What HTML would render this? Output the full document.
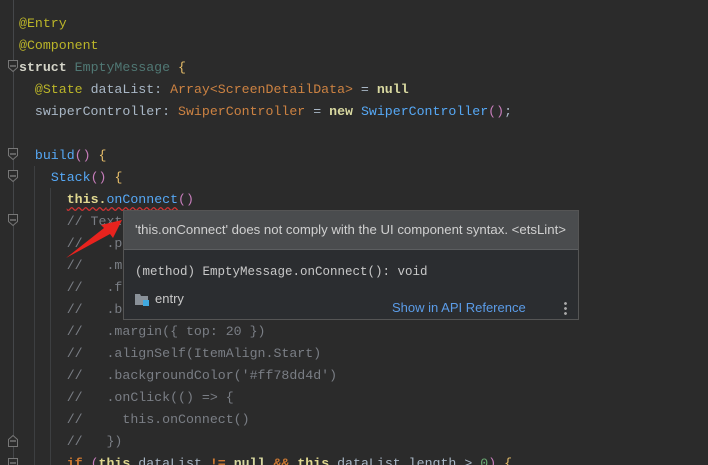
<!DOCTYPE html>
<html style="overflow:hidden;height:465px"><head><meta charset="utf-8"><style>
body{margin:0;width:708px;height:465px;background:#2b2b2b;overflow:hidden;position:relative;font-family:"Liberation Mono",monospace;}
.code{position:absolute;left:19px;top:13px;font-size:13.25px;line-height:22px;color:#a9b7c6;white-space:pre;}
.l{height:22px;}
.an{color:#bbb529}.kw{color:#cc7832;font-weight:bold}.st{color:#d4d4c8;font-weight:bold}
.ty{color:#507874}.br{color:#e8bf6a}.ar{color:#cc8242}.nl{color:#d8d8a0;font-weight:bold}
.fn{color:#56a8f5}.pr{color:#c77dbb}.cm{color:#7a7e85}.th{color:#e0d890;font-weight:bold}.nu{color:#6aab73}
.tip{position:absolute;left:123px;top:210px;width:454px;height:108px;background:#2b2d30;border:1px solid #555;font-family:"Liberation Sans",sans-serif;}
.tip .h{height:38px;background:#4a4c4e;border-bottom:1px solid #5c5e60;color:#d0d0d0;font-size:13.2px;line-height:38px;padding-left:11px;}
</style></head><body>
<div style="position:absolute;left:13px;top:0;width:1px;height:465px;background:#45474a"></div>
<div style="position:absolute;left:34px;top:166px;width:1px;height:299px;background:#3d3f41"></div>
<div style="position:absolute;left:50px;top:188px;width:1px;height:277px;background:#3d3f41"></div>
<svg style="position:absolute;left:6px;top:0" width="16" height="465">
<g fill="#2b2b2b" stroke="#777" stroke-width="1">
<path d="M2.5 60.5h9v7l-4.5 4l-4.5-4z"/><path d="M2.5 148.5h9v7l-4.5 4l-4.5-4z"/><path d="M2.5 170.5h9v7l-4.5 4l-4.5-4z"/><path d="M2.5 214.5h9v7l-4.5 4l-4.5-4z"/><path d="M2.5 446.5h9v-7l-4.5-4l-4.5 4z"/><path d="M2.5 458.5h9v7h-9z"/>
</g><g stroke="#999"><path d="M4 66h6M4 154h6M4 176h6M4 220h6M4 441h6M4 463h6"/></g></svg>
<div class="code"><div class="l an">@Entry</div><div class="l an">@Component</div><div class="l"><span class="st">struct</span> <span class="ty">EmptyMessage</span> <span class="br">{</span></div><div class="l">  <span class="an">@State</span> dataList: <span class="ar">Array&lt;ScreenDetailData&gt;</span> = <span class="nl">null</span></div><div class="l">  swiperController: <span class="ar">SwiperController</span> = <span class="nl">new</span> <span class="fn">SwiperController</span><span class="pr">()</span>;</div><div class="l"></div><div class="l">  <span class="fn">build</span><span class="pr">()</span> <span class="br">{</span></div><div class="l">    <span class="fn">Stack</span><span class="pr">()</span> <span class="br">{</span></div><div class="l">      <span class="th" style="text-decoration:underline wavy #c33;text-underline-offset:3px">this.</span><span class="fn" style="text-decoration:underline wavy #c33;text-underline-offset:3px">onConnect</span><span class="pr">()</span></div><div class="l cm">      // Text</div><div class="l cm">      //   .p</div><div class="l cm">      //   .m</div><div class="l cm">      //   .f</div><div class="l cm">      //   .b</div><div class="l cm">      //   .margin({ top: 20 })</div><div class="l cm">      //   .alignSelf(ItemAlign.Start)</div><div class="l cm">      //   .backgroundColor('#ff78dd4d')</div><div class="l cm">      //   .onClick(() =&gt; {</div><div class="l cm">      //     this.onConnect()</div><div class="l cm">      //   })</div><div class="l">      <span class="kw">if</span> <span class="pr">(</span><span class="th">this</span>.dataList <span class="kw">!=</span> <span class="nl">null</span> <span class="kw">&amp;&amp;</span> <span class="th">this</span>.dataList.length &gt; <span class="nu">0</span><span class="pr">)</span> <span class="br">{</span></div></div>
<div class="tip"><div class="h">'this.onConnect' does not comply with the UI component syntax. &lt;etsLint&gt;</div>
<div style="position:absolute;left:11px;top:54px;font-family:'Liberation Mono',monospace;font-size:12.5px;color:#c8c8c8">(method) EmptyMessage.onConnect(): void</div>
<svg style="position:absolute;left:11px;top:82px" width="16" height="14"><path d="M0 1h5l1 2h7v9H0z" fill="#8a9199"/><rect x="8" y="7" width="6" height="6" fill="#3fa9e0"/></svg>
<div style="position:absolute;left:31px;top:80px;font-size:13px;color:#c8c8c8">entry</div>
<div style="position:absolute;left:268px;top:89px;font-size:13px;color:#5b9ce8">Show in API Reference</div>
<div style="position:absolute;left:440px;top:90px;width:3px;height:14px;background:radial-gradient(circle,#aaa 1.2px,transparent 1.6px) 0 0/3px 5px"></div>
</div>
<svg style="position:absolute;left:0;top:0" width="708" height="465"><path d="M66 258L104 228L101 225L122 220L113 238L110 234Z" fill="#e8231e"/></svg>
</body></html>
